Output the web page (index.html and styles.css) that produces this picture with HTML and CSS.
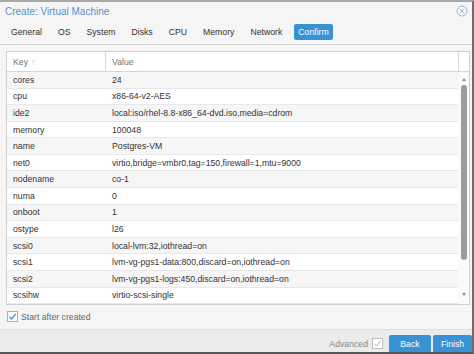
FILE: index.html
```html
<!DOCTYPE html>
<html lang="en">
<head>
    <meta charset="UTF-8">
    <title>Create: Virtual Machine</title>
    <link rel="stylesheet" href="styles.css">
</head>
<body>

<div class="window">
    <div class="titlebar">
        <span class="title">Create: Virtual Machine</span>
        <svg class="close" width="12" height="12" viewBox="0 0 12 12">
            <circle cx="6" cy="6" r="5" fill="none" stroke="#9db5d8" stroke-width="1"/>
            <path d="M3.8 3.8 L8.2 8.2 M8.2 3.8 L3.8 8.2" stroke="#9db5d8" stroke-width="1"/>
        </svg>
    </div>

    <div class="tabs">
        <span class="tab">General</span>
        <span class="tab">OS</span>
        <span class="tab">System</span>
        <span class="tab">Disks</span>
        <span class="tab">CPU</span>
        <span class="tab">Memory</span>
        <span class="tab">Network</span>
        <span class="tab active">Confirm</span>
    </div>

    <div class="panel">
        <div class="grid">
            <div class="grid-head">
                <div class="col-key">Key <span class="sort">&#8593;</span></div>
                <div class="col-value">Value</div>
                <div class="col-pad"></div>
            </div>
            <div class="grid-body">
                <div class="rows" id="rows"></div>
                <div class="scrollbar">
                    <span class="arrow up"></span>
                    <div class="track"><div class="thumb"></div></div>
                    <span class="arrow down"></span>
                </div>
            </div>
        </div>

        <label class="start">
            <span class="check on">
                <svg width="9" height="9" viewBox="0 0 9 9"><path d="M1.5 4.8 L3.6 7 L7.8 1.8" fill="none" stroke="#3d8fd6" stroke-width="1.3"/></svg>
            </span>
            Start after created
        </label>
    </div>

    <div class="footer">
        <span class="advanced">Advanced</span>
        <span class="check small">
            <svg width="9" height="9" viewBox="0 0 9 9"><path d="M1.5 4.8 L3.6 7 L7.8 1.8" fill="none" stroke="#b0b0b0" stroke-width="1"/></svg>
        </span>
        <button class="btn back">Back</button>
        <button class="btn">Finish</button>
    </div>
</div>

<script>
    const data = [
        ['cores', '24'],
        ['cpu', 'x86-64-v2-AES'],
        ['ide2', 'local:iso/rhel-8.8-x86_64-dvd.iso,media=cdrom'],
        ['memory', '100048'],
        ['name', 'Postgres-VM'],
        ['net0', 'virtio,bridge=vmbr0,tag=150,firewall=1,mtu=9000'],
        ['nodename', 'co-1'],
        ['numa', '0'],
        ['onboot', '1'],
        ['ostype', 'l26'],
        ['scsi0', 'local-lvm:32,iothread=on'],
        ['scsi1', 'lvm-vg-pgs1-data:800,discard=on,iothread=on'],
        ['scsi2', 'lvm-vg-pgs1-logs:450,discard=on,iothread=on'],
        ['scsihw', 'virtio-scsi-single']
    ];

    const rows = document.getElementById('rows');
    data.forEach((d, i) => {
        const row = document.createElement('div');
        row.className = 'row' + (i % 2 === 0 ? ' alt' : '');
        row.innerHTML = '<div class="col-key"></div><div class="col-value"></div>';
        row.children[0].textContent = d[0];
        row.children[1].textContent = d[1];
        rows.appendChild(row);
    });
</script>

</body>
</html>
```

FILE: styles.css
```css
body {
    margin: 0;
    font-family: "Liberation Sans", Arial, sans-serif;
    color: #333;
    background: #f5f5f5;
}

.window {
    box-sizing: border-box;
    width: 474px;
    height: 354px;
    overflow: hidden;
    display: flex;
    flex-direction: column;
    background: #f5f5f5;
    border-top: 2px solid #a8a8a8;
    border-right: 2px solid #6e6e6e;
    border-bottom: 2px solid #555;
}

.titlebar {
    height: 18px;
    display: flex;
    align-items: center;
    justify-content: space-between;
    padding: 0 4px 0 5px;
}

.title {
    font-size: 10px;
    color: #5d8fca;
}

.close {
    display: block;
    margin-top: -1px;
}

.tabs {
    height: 24px;
    display: flex;
    align-items: center;
    gap: 7px;
    padding-left: 6.5px;
    border-bottom: 1px solid #d6d6d6;
}

.tab {
    font-size: 8.7px;
    padding: 0 4.5px;
    height: 16px;
    line-height: 16px;
    color: #333;
    border-radius: 2px;
}

.tab.active {
    background: #3892d4;
    color: #fff;
}

.panel {
    flex: 1;
    display: flex;
    flex-direction: column;
    padding: 6px 2px 0 6px;
}

.grid {
    height: 254px;
    box-sizing: border-box;
    border: 1px solid #cfcfcf;
    background: #fff;
    display: flex;
    flex-direction: column;
    font-size: 8.7px;
}

.grid-head {
    height: 19px;
    display: flex;
    border-bottom: 1px solid #d4d4d4;
    background: #fff;
    color: #777;
}

.grid-head > div {
    display: flex;
    align-items: center;
}

.col-key {
    width: 99px;
    padding-left: 6px;
    box-sizing: border-box;
}

.grid-head .col-key {
    border-right: 1px solid #d9d9d9;
}

.col-value {
    flex: 1;
    padding-left: 6px;
    white-space: nowrap;
}

.grid-head .col-pad {
    width: 10px;
    border-left: 1px solid #d9d9d9;
}

.sort {
    color: #aac4e4;
    margin-left: 3px;
}

.grid-body {
    flex: 1;
    display: flex;
    min-height: 0;
}

.rows {
    flex: 1;
    display: flex;
    flex-direction: column;
}

.row {
    height: 16.7px;
    box-sizing: border-box;
    display: flex;
    align-items: center;
    border-bottom: 1px solid #e8e8e8;
    color: #333;
}

.row.alt {
    background: #f6f6f6;
}

.scrollbar {
    width: 11px;
    display: flex;
    flex-direction: column;
    align-items: center;
    background: #fafafa;
}

.arrow {
    width: 0;
    height: 0;
    border-left: 2.5px solid transparent;
    border-right: 2.5px solid transparent;
    margin: 6px 0 4px;
}

.arrow.up {
    border-bottom: 3px solid #888;
}

.arrow.down {
    border-top: 3px solid #888;
    margin: 5px 0 8px;
}

.track {
    flex: 1;
    width: 100%;
    display: flex;
    justify-content: center;
}

.thumb {
    width: 6px;
    height: 175px;
    border-radius: 3px;
    background: #9c9c9c;
}

.start {
    height: 23px;
    display: flex;
    align-items: center;
    gap: 3px;
    padding-left: 1px;
    font-size: 8.7px;
    color: #666;
}

.check {
    width: 9px;
    height: 9px;
    border: 1px solid #8fb6de;
    background: #fff;
    display: flex;
    align-items: center;
    justify-content: center;
}

.check.small {
    border-color: #bdbdbd;
    margin-right: 4px;
}

.footer {
    height: 23px;
    display: flex;
    align-items: center;
    justify-content: flex-end;
    padding: 5px 0 0 0;
    box-sizing: border-box;
    background: #ebebeb;
    border-top: 1px solid #e0e0e0;
    font-size: 8.7px;
}

.advanced {
    color: #888;
    margin-right: 4px;
}

.btn {
    font-family: inherit;
    font-size: 8.7px;
    color: #fff;
    background: #3892d4;
    border: none;
    border-radius: 2px;
    width: 39px;
    height: 18px;
    padding: 0;
    margin-left: 2px;
}

.btn.back {
    width: 42px;
}
```
